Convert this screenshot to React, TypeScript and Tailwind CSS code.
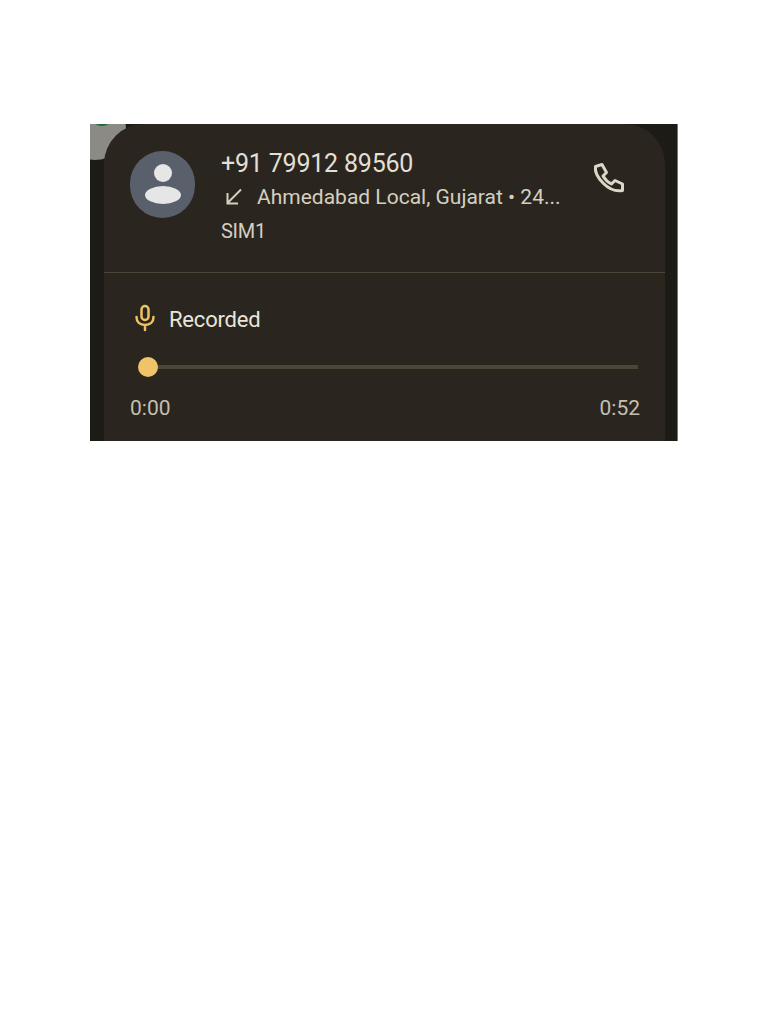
export default function App() {
  return (
    <div className="min-h-[1024px] bg-white pt-[124px] pl-[90px] font-['Roboto',sans-serif]">
      <div className="relative h-[317px] w-[588px] overflow-hidden border-r border-[#77746c] bg-[#1d1b16] pl-[14px]">
        <div className="absolute -left-[26px] -top-[26px] h-[62px] w-[62px] rounded-full bg-[#8b8a84]">
          <div className="absolute left-[26px] top-0 h-[28px] w-[24px] rounded-full bg-[#1f6a38]" />
        </div>
        <div className="relative h-full w-[561px] rounded-t-[40px] bg-[#2a261f]">
          <div className="flex h-[149px] border-b border-[#4a4638] pl-[26px] pr-[40px] pt-[27px]">
            <div className="flex h-[67px] w-[65px] shrink-0 flex-col items-center rounded-full bg-[#5a5f6c] pt-[13px]">
              <div className="h-[18px] w-[18px] rounded-full bg-[#e6e6e6]" />
              <div className="mt-[4px] h-[18px] w-[36px] rounded-[50%] bg-[#e6e6e6]" />
            </div>
            <div className="ml-[26px] flex w-[350px] shrink-0 flex-col">
              <div className="text-[25px] leading-[26px] tracking-[-0.2px] text-[#e3dfd3]">+91 79912 89560</div>
              <div className="mt-[8px] flex h-[24px] items-center text-[#d4cfc0]">
                <svg className="ml-[3px] shrink-0" width="20" height="20" viewBox="0 0 20 20" fill="none" stroke="#d4cfc0" strokeWidth="2">
                  <path d="M17 2.5 4 15.5M3.5 6v10.5H14" />
                </svg>
                <span className="ml-[13px] whitespace-nowrap text-[21px] leading-[24px]">Ahmedabad Local, Gujarat • 24...</span>
              </div>
              <div className="mt-[10px] text-[20px] leading-[24px] tracking-[-0.3px] text-[#d4cfc0]">SIM1</div>
            </div>
            <svg className="ml-[21px] mt-[10px] shrink-0" width="34" height="34" viewBox="0 0 34 34" fill="none" stroke="#dcd6c6" strokeWidth="3" strokeLinejoin="round">
              <path d="M3.5 5.5 10 3.5l4.5 8-3.5 3.5c2 3.5 4.500 6 8.500 8l3.500-3.500 7.500 3.500v6.500c-6 1-13-1-19-7S2.500 11 3.500 5.500Z" />
            </svg>
          </div>
          <div className="flex items-center pl-[31px] pt-[30px]">
            <svg width="20" height="28" viewBox="0 0 20 28" fill="none" stroke="#eec263" strokeWidth="2.500" strokeLinecap="round">
              <rect x="6.500" y="2" width="7" height="14" rx="3.500" />
              <path d="M1.500 13c0 5 3.500 8 8.500 8s8.500-3 8.500-8M10 21v5" />
            </svg>
            <span className="ml-[14px] mt-[4px] text-[22px] leading-[26px] tracking-[-0.2px] text-[#e9e5da]">Recorded</span>
          </div>
          <div className="relative ml-[34px] mt-[24px] h-[20px] w-[500px]">
            <div className="absolute left-[10px] right-0 top-[8px] h-[4px] bg-[#4b4638]" />
            <div className="absolute left-0 top-0 h-[20px] w-[20px] rounded-full bg-[#efc36a]" />
          </div>
          <div className="ml-[26px] mt-[18px] flex w-[510px] justify-between text-[21px] leading-[26px] text-[#c4bfb1]">
            <span>0:00</span>
            <span>0:52</span>
          </div>
        </div>
      </div>
    </div>
  );
}
